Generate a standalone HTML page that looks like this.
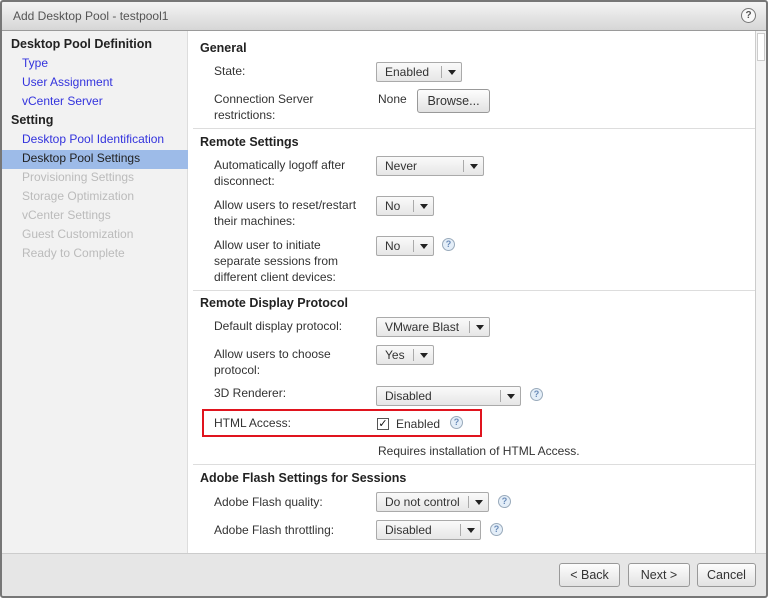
<!DOCTYPE html>
<html><head><style>
*{margin:0;padding:0;box-sizing:border-box}
body{width:768px;height:598px;overflow:hidden;font-family:"Liberation Sans","DejaVu Sans",sans-serif;font-size:12px;color:#333;background:#fff;position:relative}
.a{position:absolute;white-space:nowrap}
#frame{position:absolute;left:0;top:0;width:768px;height:598px;border:2px solid #777;border-radius:3px}
#title{left:2px;top:2px;width:764px;height:29px;background:linear-gradient(#f4f4f4,#d6d6d6);border-bottom:1px solid #9a9a9a}
#nav{left:2px;top:31px;width:186px;height:522px;background:#f2f2f2;border-right:1px solid #ddd}
.nh{font-weight:bold;color:#222;font-size:12.5px;left:11px}
.nl{color:#3333dd;left:22px}
.nd{color:#bbb;left:22px}
#sel{left:2px;top:150px;width:186px;height:19px;background:#9dbbe8}
.h{font-weight:bold;color:#222;left:200px;font-size:12.5px}
.l{left:214px;color:#333;line-height:16px}
.sep{left:193px;width:562px;height:1px;background:#ddd}
.dd{position:absolute;height:20px;border:1px solid #aaa;border-radius:2px;background:linear-gradient(#fafafa,#e6e6e6);font-size:12px;line-height:18px;padding-left:8px;color:#333}
.dd i{position:absolute;right:0;top:3px;width:20px;height:12px;border-left:1px solid #aaa}
.dd i:after{content:"";position:absolute;left:6px;top:4px;border:4px solid transparent;border-top:5px solid #222;border-bottom:0}
.q{position:absolute;width:13px;height:13px;border-radius:50%;border:1px solid #9ab;background:#e4eef8;color:#6a8bb8;font-size:9px;line-height:11px;text-align:center;font-weight:bold}
.btn{position:absolute;height:24px;border:1px solid #999;border-radius:3px;background:linear-gradient(#fdfdfd,#e2e2e2);text-align:center;line-height:22px;font-size:12.5px;color:#333}
#foot{left:2px;top:553px;width:764px;height:43px;background:#e6e6e6;border-top:1px solid #ccc}
#sb{left:755px;top:31px;width:11px;height:522px;background:#f4f4f4;border-left:1px solid #ccc}
</style></head><body>
<div class="a" id="title"></div>
<div class="a" style="left:13px;top:9px;color:#555;font-size:12px">Add Desktop Pool - testpool1</div>
<div class="a" style="left:741px;top:8px;width:15px;height:15px;border-radius:50%;border:1px solid #777;background:#f8f8f8;font-size:10px;text-align:center;line-height:13px;font-weight:bold;color:#555">?</div>
<div class="a" id="nav"></div>
<div class="a" id="sel"></div>
<div class="a nh" style="top:37px">Desktop Pool Definition</div>
<div class="a nl" style="top:56px">Type</div>
<div class="a nl" style="top:75px">User Assignment</div>
<div class="a nl" style="top:94px">vCenter Server</div>
<div class="a nh" style="top:113px">Setting</div>
<div class="a nl" style="top:132px">Desktop Pool Identification</div>
<div class="a" style="left:22px;top:151px;color:#222">Desktop Pool Settings</div>
<div class="a nd" style="top:170px">Provisioning Settings</div>
<div class="a nd" style="top:189px">Storage Optimization</div>
<div class="a nd" style="top:208px">vCenter Settings</div>
<div class="a nd" style="top:227px">Guest Customization</div>
<div class="a nd" style="top:246px">Ready to Complete</div>

<div class="a h" style="top:41px">General</div>
<div class="a l" style="top:63px">State:</div>
<div class="dd" style="left:376px;top:62px;width:86px">Enabled<i></i></div>
<div class="a l" style="top:91px">Connection Server<br>restrictions:</div>
<div class="a" style="left:378px;top:92px">None</div>
<div class="btn" style="left:417px;top:89px;width:73px">Browse...</div>
<div class="a sep" style="top:128px"></div>
<div class="a h" style="top:135px">Remote Settings</div>
<div class="a l" style="top:157px">Automatically logoff after<br>disconnect:</div>
<div class="dd" style="left:376px;top:156px;width:108px">Never<i></i></div>
<div class="a l" style="top:197px">Allow users to reset/restart<br>their machines:</div>
<div class="dd" style="left:376px;top:196px;width:58px">No<i></i></div>
<div class="a l" style="top:237px">Allow user to initiate<br>separate sessions from<br>different client devices:</div>
<div class="dd" style="left:376px;top:236px;width:58px">No<i></i></div>
<div class="q" style="left:442px;top:238px">?</div>
<div class="a sep" style="top:290px"></div>
<div class="a h" style="top:296px">Remote Display Protocol</div>
<div class="a l" style="top:318px">Default display protocol:</div>
<div class="dd" style="left:376px;top:317px;width:114px">VMware Blast<i></i></div>
<div class="a l" style="top:346px">Allow users to choose<br>protocol:</div>
<div class="dd" style="left:376px;top:345px;width:58px">Yes<i></i></div>
<div class="a l" style="top:385px">3D Renderer:</div>
<div class="dd" style="left:376px;top:386px;width:145px">Disabled<i></i></div>
<div class="q" style="left:530px;top:388px">?</div>
<div class="a" style="left:202px;top:409px;width:280px;height:28px;border:2px solid #e0141e"></div>
<div class="a l" style="top:415px">HTML Access:</div>
<div class="a" style="left:377px;top:418px;width:12px;height:12px;border:1px solid #555;background:#fff;font-size:11px;line-height:10px;text-align:center;color:#111">✓</div>
<div class="a" style="left:396px;top:417px">Enabled</div>
<div class="q" style="left:450px;top:416px">?</div>
<div class="a" style="left:378px;top:444px">Requires installation of HTML Access.</div>
<div class="a sep" style="top:464px"></div>
<div class="a h" style="top:471px">Adobe Flash Settings for Sessions</div>
<div class="a l" style="top:494px">Adobe Flash quality:</div>
<div class="dd" style="left:376px;top:492px;width:113px">Do not control<i></i></div>
<div class="q" style="left:498px;top:495px">?</div>
<div class="a l" style="top:522px">Adobe Flash throttling:</div>
<div class="dd" style="left:376px;top:520px;width:105px">Disabled<i></i></div>
<div class="q" style="left:490px;top:523px">?</div>

<div class="a" id="sb"></div>
<div class="a" style="left:757px;top:33px;width:8px;height:28px;background:#fff;border:1px solid #ccc"></div>
<div class="a" id="foot"></div>
<div class="btn" style="left:559px;top:563px;width:61px">&lt; Back</div>
<div class="btn" style="left:628px;top:563px;width:62px">Next &gt;</div>
<div class="btn" style="left:697px;top:563px;width:59px">Cancel</div>
<div id="frame"></div>
</body></html>
